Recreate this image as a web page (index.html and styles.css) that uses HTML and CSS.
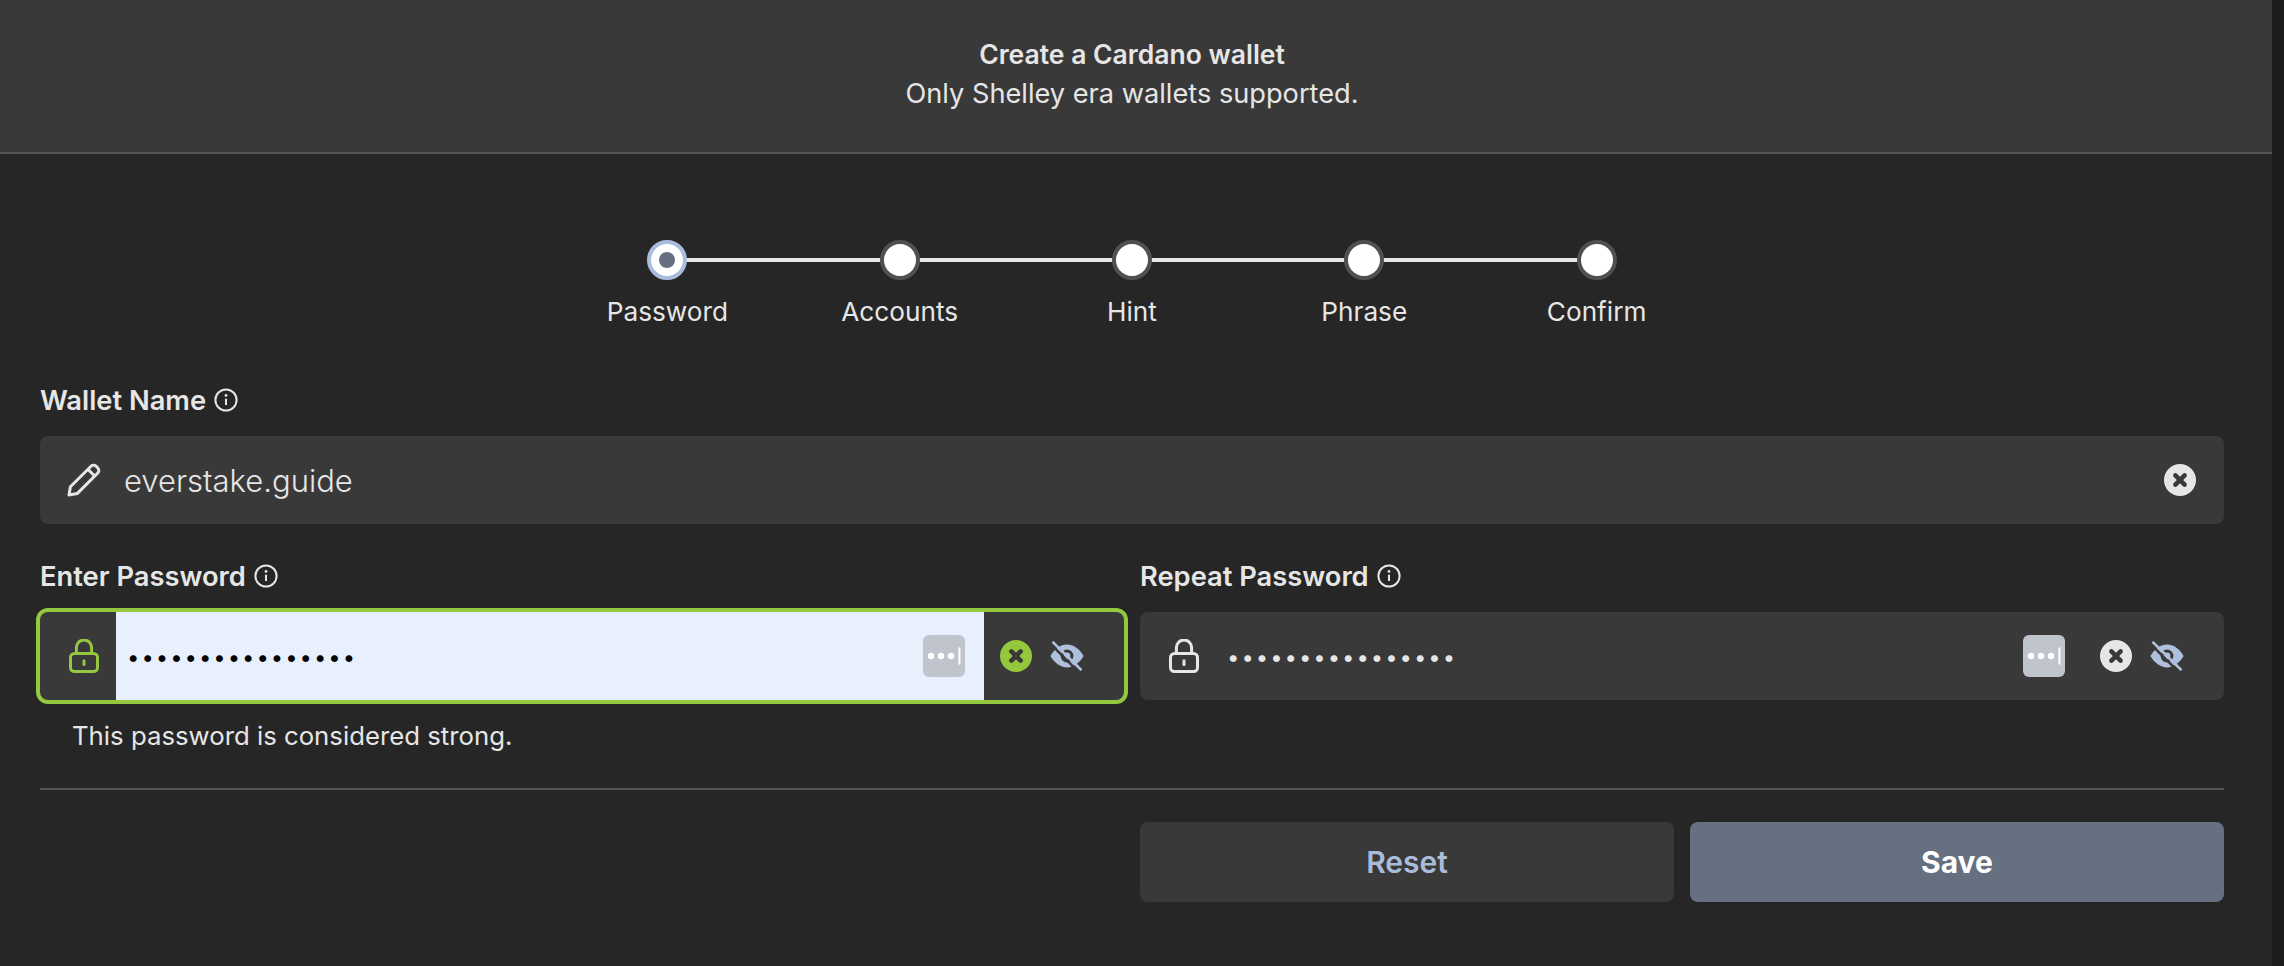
FILE: index.html
```html
<!DOCTYPE html>
<html lang="en">
<head>
<meta charset="utf-8">
<title>Create a Cardano wallet</title>
<link rel="stylesheet" href="styles.css">
</head>
<body>
<div class="app">
  <main class="main">
    <header class="header">
      <div class="title">Create a Cardano wallet</div>
      <div class="subtitle">Only Shelley era wallets supported.</div>
    </header>
    <div class="content">
      <ol class="stepper">
        <li class="step active"><span class="dot"></span><span class="step-label">Password</span></li>
        <li class="step"><span class="dot"></span><span class="step-label">Accounts</span></li>
        <li class="step"><span class="dot"></span><span class="step-label">Hint</span></li>
        <li class="step"><span class="dot"></span><span class="step-label">Phrase</span></li>
        <li class="step"><span class="dot"></span><span class="step-label">Confirm</span></li>
      </ol>

      <div class="label first">Wallet Name
        <svg class="info" viewBox="0 0 24 24"><circle cx="12" cy="12" r="10.6"/><path d="M12 10.8v6.2"/><circle class="fill" cx="12" cy="7.4" r="1.4"/></svg>
      </div>
      <div class="field">
        <span class="lead pencil">
          <svg viewBox="0 0 34 34"><path d="M2 32l1.4-8.2L24 3.200a3.600 3.600 0 0 1 5 0l1.800 1.800a3.600 3.600 0 0 1 0 5L10.200 30.600z"/><path d="M21 6.400l6.600 6.600"/></svg>
        </span>
        <span class="name">everstake.guide</span>
        <svg class="clear end" viewBox="0 0 32 32"><circle class="disc" cx="16" cy="16" r="16"/><path class="cross" d="M11.4 11.4l9.2 9.2M20.6 11.4l-9.2 9.2"/></svg>
      </div>

      <div class="columns">
        <div class="column">
          <div class="label">Enter Password
            <svg class="info" viewBox="0 0 24 24"><circle cx="12" cy="12" r="10.6"/><path d="M12 10.8v6.2"/><circle class="fill" cx="12" cy="7.4" r="1.4"/></svg>
          </div>
          <div class="field password strong">
            <span class="lead lock">
              <svg viewBox="0 0 30 34"><rect x="1.500" y="14.500" width="27" height="18" rx="4"/><path d="M7.400 14.500V8.600a7.600 7.600 0 0 1 15.200 0V14.500"/><path class="keyhole" d="M15 21.800v3.800"/></svg>
            </span>
            <div class="entry">
              <span class="dots">••••••••••••••••</span>
              <svg class="key" viewBox="0 0 42 42"><rect width="42" height="42" rx="6"/><circle cx="8" cy="21" r="3.200"/><circle cx="18" cy="21" r="3.200"/><circle cx="28" cy="21" r="3.200"/><rect x="35.400" y="12.500" width="2" height="17"/></svg>
            </div>
            <span class="trail">
              <svg class="clear" viewBox="0 0 32 32"><circle class="disc" cx="16" cy="16" r="16"/><path class="cross" d="M11.400 11.400l9.200 9.200M20.600 11.400l-9.200 9.200"/></svg>
              <svg class="eye" viewBox="0 0 34 30"><path class="lid" d="M.4 15C4.400 8.200 10.400 3.600 17 3.600S29.600 8.200 33.600 15C29.600 21.800 23.600 26.400 17 26.400S4.400 21.800.4 15z"/><circle class="iris" cx="17" cy="15" r="6.400"/><circle class="pupil" cx="17" cy="15" r="3.400"/><path class="slash-gap" d="M1 3.400l27 27"/><path class="slash" d="M2.500 .8l29 28.400"/></svg>
            </span>
          </div>
          <p class="help">This password is considered strong.</p>
        </div>
        <div class="column">
          <div class="label">Repeat Password
            <svg class="info" viewBox="0 0 24 24"><circle cx="12" cy="12" r="10.6"/><path d="M12 10.800v6.200"/><circle class="fill" cx="12" cy="7.400" r="1.400"/></svg>
          </div>
          <div class="field password">
            <span class="lead lock">
              <svg viewBox="0 0 30 34"><rect x="1.500" y="14.500" width="27" height="18" rx="4"/><path d="M7.400 14.500V8.600a7.600 7.600 0 0 1 15.200 0V14.500"/><path class="keyhole" d="M15 21.800v3.800"/></svg>
            </span>
            <div class="entry">
              <span class="dots">••••••••••••••••</span>
              <svg class="key" viewBox="0 0 42 42"><rect width="42" height="42" rx="6"/><circle cx="8" cy="21" r="3.200"/><circle cx="18" cy="21" r="3.200"/><circle cx="28" cy="21" r="3.200"/><rect x="35.400" y="12.500" width="2" height="17"/></svg>
            </div>
            <span class="trail">
              <svg class="clear" viewBox="0 0 32 32"><circle class="disc" cx="16" cy="16" r="16"/><path class="cross" d="M11.400 11.400l9.200 9.200M20.600 11.400l-9.200 9.200"/></svg>
              <svg class="eye" viewBox="0 0 34 30"><path class="lid" d="M.4 15C4.400 8.200 10.400 3.600 17 3.600S29.600 8.200 33.600 15C29.600 21.800 23.600 26.400 17 26.400S4.400 21.800.4 15z"/><circle class="iris" cx="17" cy="15" r="6.400"/><circle class="pupil" cx="17" cy="15" r="3.400"/><path class="slash-gap" d="M1 3.400l27 27"/><path class="slash" d="M2.500 .8l29 28.400"/></svg>
            </span>
          </div>
        </div>
      </div>

      <hr class="divider">

      <div class="actions">
        <button class="btn reset" type="button">Reset</button>
        <button class="btn save" type="button">Save</button>
      </div>
    </div>
  </main>
  <div class="scrollbar"></div>
</div>
</body>
</html>
```
FILE: styles.css
```css
* { box-sizing: border-box; }
html, body { margin: 0; height: 100%; }
body {
  background: #262626;
  color: #e6e6e6;
  font-family: Inter, "Liberation Sans", sans-serif;
  overflow: hidden;
}
.app { display: flex; height: 966px; }
.main { flex: 1; min-width: 0; }
.scrollbar { width: 12px; background: #1f1d1c; }

.header {
  height: 154px;
  padding: 34px 8px 0 0;
  background: #393939;
  border-bottom: 2px solid #555;
  text-align: center;
  line-height: 40px;
}
.title { font-size: 26.5px; font-weight: 600; }
.subtitle { font-size: 27.2px; font-weight: 400; }

.content { padding: 86px 48px 0 40px; }

.stepper {
  display: flex;
  justify-content: center;
  list-style: none;
  margin: 0;
  padding: 0;
}
.step {
  position: relative;
  width: 232.3px;
  display: flex;
  flex-direction: column;
  align-items: center;
  gap: 16px;
}
.step:not(:last-child)::after {
  content: "";
  position: absolute;
  top: 18px;
  left: 50%;
  width: 100%;
  height: 4px;
  background: #e6e6e6;
}
.dot {
  position: relative;
  z-index: 1;
  width: 40px;
  height: 40px;
  border-radius: 50%;
  background: #fff;
  border: 4px solid #505050;
}
.step.active .dot { border-color: #a9bcdb; }
.step.active .dot::after {
  content: "";
  position: absolute;
  inset: 8px;
  border-radius: 50%;
  background: #667080;
}
.step-label { font-size: 26.2px; line-height: 32px; font-weight: 400; }

.label {
  display: flex;
  align-items: center;
  gap: 8px;
  height: 32px;
  font-size: 27.3px;
  font-weight: 600;
}
.label.first { margin-top: 56px; }
.info {
  width: 24px;
  height: 24px;
  fill: none;
  stroke: #e6e6e6;
  stroke-width: 2;
}
.info .fill { fill: #e6e6e6; stroke: none; }

.field {
  position: relative;
  display: flex;
  align-items: center;
  height: 88px;
  margin-top: 20px;
  background: #393939;
  border-radius: 8px;
}
.lead {
  flex: none;
  display: flex;
  align-items: center;
  justify-content: center;
}
.pencil { width: 84px; padding-left: 4px; }
.pencil svg { width: 34px; height: 34px; fill: none; stroke: #e6e6e6; stroke-width: 3; stroke-linejoin: round; }
.name { font-size: 31px; font-weight: 300; flex: 1; }
.clear { flex: none; width: 32px; height: 32px; }
.clear .disc { fill: #e6e6e6; }
.clear .cross { fill: none; stroke: #393939; stroke-width: 4.6; stroke-linecap: round; }
.clear.end { margin-right: 28px; }

.columns { display: grid; grid-template-columns: 1fr 1fr; gap: 16px; margin-top: 36px; }
.column { min-width: 0; }

.lock { width: 76px; padding-left: 12px; }
.lock svg { width: 30px; height: 34px; fill: none; stroke: #e6e6e6; stroke-width: 3; }
.lock .keyhole { stroke-width: 3; stroke-linecap: round; }
.entry {
  flex: 1;
  align-self: stretch;
  display: flex;
  align-items: center;
  justify-content: space-between;
  padding: 0 19px 0 11px;
  min-width: 0;
}
.dots { font-size: 22px; letter-spacing: 2px; line-height: 1; padding-top: 2px; }
.key { width: 42px; height: 42px; flex: none; }
.key rect:first-child { fill: #c0c4cc; }
.key circle, .key rect + circle ~ rect { fill: #fff; }
.trail {
  flex: none;
  width: 140px;
  display: flex;
  align-items: center;
  gap: 18px;
  padding-left: 16px;
}
.eye { width: 34px; height: 30px; flex: none; }
.eye .lid { fill: #afc0dc; }
.eye .iris { fill: #393939; }
.eye .pupil { fill: #afc0dc; }
.eye .slash-gap { stroke: #393939; stroke-width: 2.4; }
.eye .slash { stroke: #afc0dc; stroke-width: 2.6; }

.strong { box-shadow: 0 0 0 4px #94c83f; }
.strong .entry { background: #e8f0fe; color: #000; }
.strong .lock svg { stroke: #94c83f; }
.strong .clear .disc { fill: #94c83f; }

.help { margin: 20px 0 0 32px; font-size: 25.75px; line-height: 32px; font-weight: 400; }

.divider { height: 2px; margin: 36px 0 0; border: 0; background: #555; }

.actions {
  display: grid;
  grid-template-columns: 534px 534px;
  justify-content: end;
  gap: 16px;
  margin-top: 32px;
}
.btn {
  height: 80px;
  border: 0;
  border-radius: 8px;
  font-family: inherit;
  font-size: 30px;
  font-weight: 600;
}
.reset { background: #393939; color: #a9bcdb; }
.save { background: #667080; color: #fff; font-weight: 700; }
```
